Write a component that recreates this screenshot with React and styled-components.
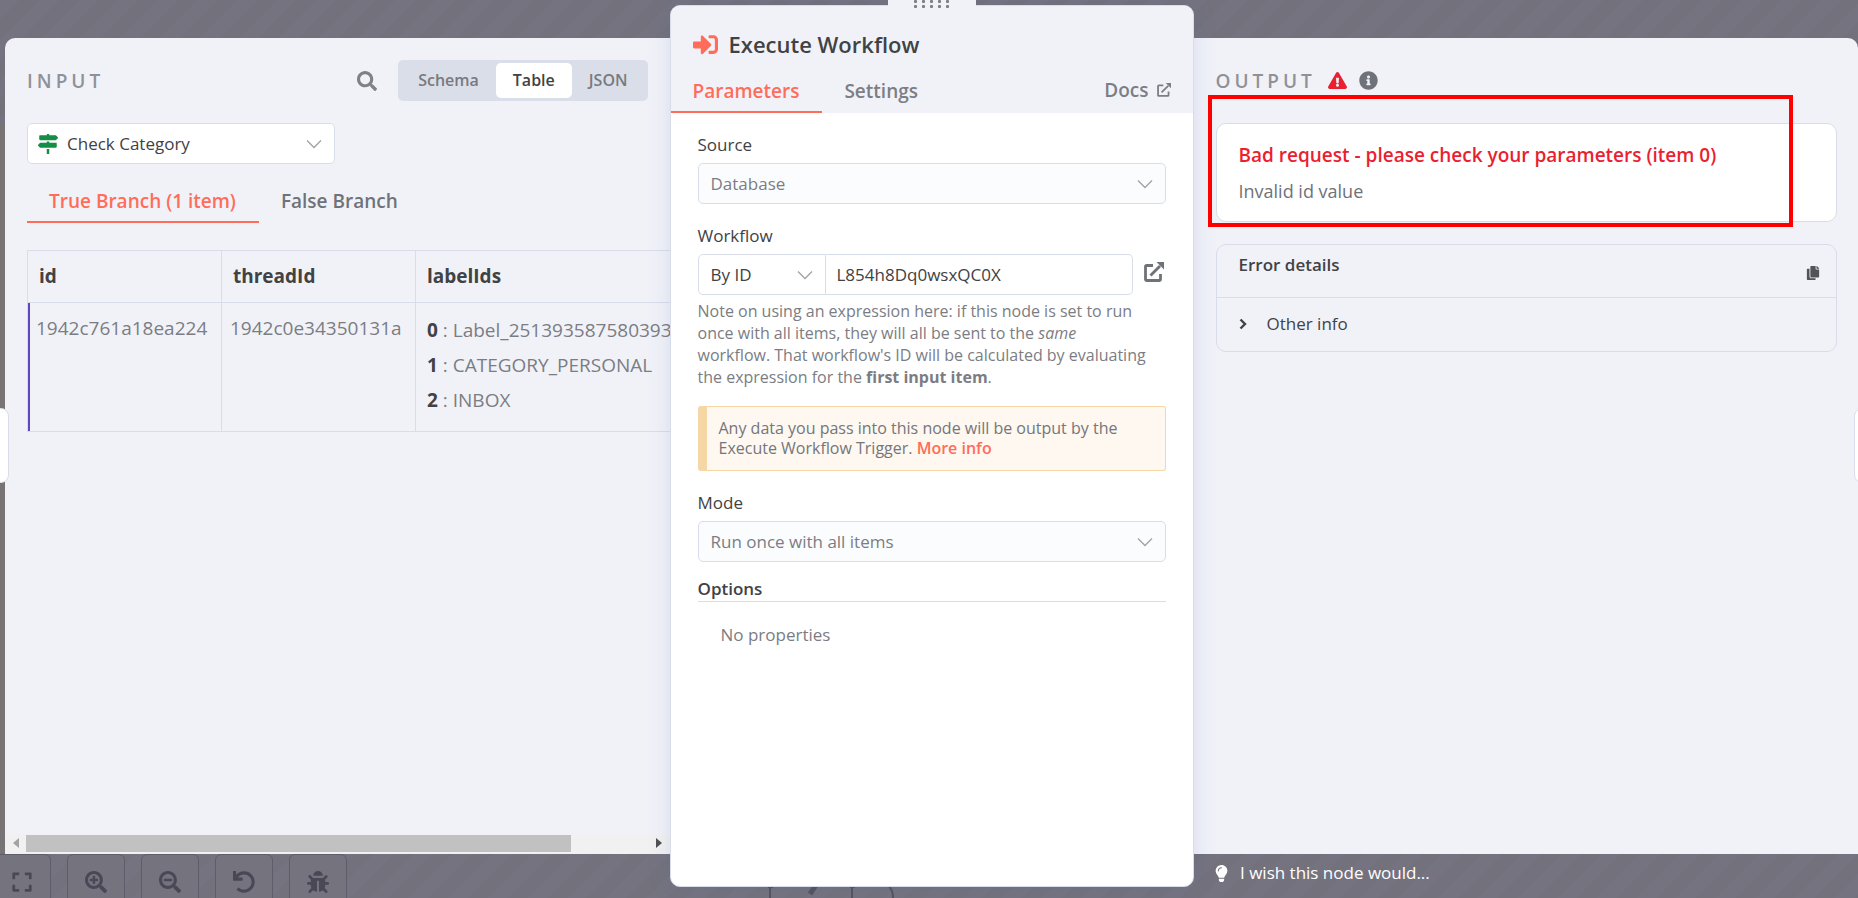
import React from "react";
import styled, { createGlobalStyle, css } from "styled-components";
import {
  FaSearch, FaMapSigns, FaSignInAlt, FaExclamationTriangle, FaInfoCircle, FaCopy,
  FaLightbulb, FaExpand, FaSearchPlus, FaSearchMinus, FaUndo, FaBug,
} from "react-icons/fa";

const c = {
  panel: "#f1f2f8",
  line: "#d9dde9",
  text: "#414244",
  muted: "#7b7d83",
  strong: "#6f7278",
  coral: "#ff6d5a",
  red: "#ea1f30",
};

const Global = createGlobalStyle`
  *, *::before, *::after { box-sizing: border-box; }
  body {
    margin: 0;
    overflow: hidden;
    font-family: "Open Sans", sans-serif;
    font-size: 17px;
    color: ${c.text};
  }
  button, input, select { font: inherit; color: inherit; }
`;

const Page = styled.div`
  position: relative;
  display: flex;
  flex-direction: column;
  height: 100vh;
  overflow: hidden;
  background: repeating-linear-gradient(135deg, #75737f 0 14px, #73717c 14px 28px);
`;

const Columns = styled.main`
  flex: 1;
  min-height: 0;
  display: grid;
  grid-template-columns: minmax(0, 1fr) 524px minmax(0, 1fr);
  padding-left: 5px;
`;

const Side = styled.section`
  display: flex;
  flex-direction: column;
  min-width: 0;
  margin-top: 38px;
  margin-bottom: 44px;
  background: ${c.panel};
  border-radius: ${(p) => (p.$right ? "0 10px 0 0" : "10px 0 0 0")};
  ${(p) => p.$right && css`padding: 0 21px 0 22px;`}
`;

const SideHeader = styled.header`
  display: flex;
  align-items: center;
  gap: 12px;
  height: 41px;
  margin-top: 22px;
  ${(p) => p.$inset && css`padding: 0 22px;`}
`;

const PanelTitle = styled.h2`
  margin: 0;
  font-size: 19px;
  line-height: 26px;
  font-weight: 600;
  letter-spacing: 4px;
  color: #8f9198;
  ${(p) => p.$grow && css`flex: 1;`}
`;

const IconButton = styled.button`
  display: flex;
  align-items: center;
  justify-content: center;
  padding: 0;
  border: 0;
  background: none;
  cursor: pointer;
  color: ${(p) => p.$color || "#7f8187"};
  font-size: ${(p) => p.$size || 20}px;
`;

const Segments = styled.div`
  display: flex;
  margin-left: 9px;
  padding: 3px;
  height: 41px;
  border-radius: 5px;
  background: #dadee8;
`;

const Segment = styled.button`
  border: 0;
  border-radius: 5px;
  padding: 0 17px 2px;
  line-height: 30px;
  font-size: 16px;
  font-weight: 600;
  cursor: pointer;
  background: ${(p) => (p.$active ? "#fff" : "transparent")};
  color: ${(p) => (p.$active ? c.text : "#777a81")};
`;

const SelectShell = styled.div`
  position: relative;
  display: flex;
  align-items: center;
  height: 41px;
  width: ${(p) => p.$width || "100%"};
  border: 1px solid ${c.line};
  border-radius: ${(p) => (p.$joined ? "5px 0 0 5px" : "5px")};
  background: ${(p) => (p.$soft ? "#fbfcfe" : "#fff")};
  color: ${(p) => (p.$soft ? c.muted : c.text)};
  select {
    flex: 1;
    width: 100%;
    height: 100%;
    appearance: none;
    border: 0;
    outline: 0;
    background: none;
    padding: 0 40px 0 12px;
  }
  > svg:last-child {
    position: absolute;
    right: 12px;
    pointer-events: none;
  }
`;

const SourcePicker = styled.div`
  margin: 22px 22px 0;
  svg:first-child { margin-left: 10px; flex: none; }
  select { padding-left: 9px; }
`;

const BranchTabs = styled.nav`
  display: flex;
  margin: 23px 22px 0;
`;

const BranchTab = styled.button`
  height: 36px;
  padding: 0 23px 7px 22px;
  border: 0;
  border-bottom: 2px solid ${(p) => (p.$active ? c.coral : "transparent")};
  background: none;
  font-size: 19px;
  line-height: 24px;
  font-weight: 600;
  cursor: pointer;
  color: ${(p) => (p.$active ? c.coral : c.strong)};
`;

const TableArea = styled.div`
  flex: 1;
  min-height: 0;
  overflow: hidden;
  margin: 27px 0 0 22px;
`;

const DataTable = styled.table`
  width: 860px;
  table-layout: fixed;
  border-collapse: separate;
  border-spacing: 0;
  border-top: 1px solid ${c.line};
  border-left: 1px solid ${c.line};
  font-size: 19px;
  th, td {
    border-right: 1px solid ${c.line};
    border-bottom: 1px solid ${c.line};
    text-align: left;
    vertical-align: top;
  }
  th { height: 52px; padding: 13px 11px; line-height: 25px; font-weight: 700; }
  td { height: 129px; padding: 12px 8px; line-height: 26px; color: ${c.muted}; white-space: nowrap; }
  td:first-child { box-shadow: inset 2px 0 #5f47c4; }
  td:last-child { padding: 10px 11px; }
`;

const LabelList = styled.div`
  display: grid;
  grid-auto-rows: 35px;
  line-height: 35px;
  b { color: ${c.text}; }
`;

const ScrollBar = styled.div`
  display: flex;
  align-items: center;
  justify-content: space-between;
  height: 20px;
  padding: 0 8px 2px;
  background: #f1f1f1;
`;

const ScrollThumb = styled.div`
  flex: 1;
  height: 17px;
  margin: 0 85px 0 7px;
  background: #c1c1c1;
`;

const Center = styled.section`
  position: relative;
  display: flex;
  flex-direction: column;
  margin: 5px 0 11px;
  border: 1px solid ${c.line};
  border-radius: 10px;
  background: #fff;
  box-shadow: 0 0 24px rgba(70, 100, 180, 0.14);
`;

const DragTab = styled.div`
  position: absolute;
  top: -6px;
  left: 50%;
  transform: translateX(-50%);
  display: flex;
  justify-content: center;
  width: 88px;
  height: 10px;
  background: ${c.panel};
`;

const CenterHeader = styled.header`
  height: 107px;
  border-radius: 9px 9px 0 0;
  background: ${c.panel};
`;

const TitleRow = styled.div`
  display: flex;
  align-items: center;
  gap: 11px;
  padding: 23px 22px 0;
  svg { color: ${c.coral}; }
  h1 { margin: 0; font-size: 22px; line-height: 30px; font-weight: 600; }
`;

const NodeTabs = styled.nav`
  display: flex;
  align-items: flex-end;
  margin-top: 13px;
`;

const NodeTab = styled.button`
  height: 41px;
  padding: 0 23px 2px 22px;
  border: 0;
  border-bottom: 2px solid ${(p) => (p.$active ? c.coral : "transparent")};
  background: none;
  font-size: 19px;
  line-height: 24px;
  font-weight: 600;
  cursor: pointer;
  color: ${(p) => (p.$active ? c.coral : "#7c7e84")};
`;

const DocsLink = styled.a`
  display: flex;
  align-items: center;
  gap: 8px;
  height: 41px;
  margin-left: auto;
  padding: 0 22px 5px;
  font-size: 19px;
  font-weight: 600;
  color: #7c7e84;
  text-decoration: none;
`;

const Form = styled.form`
  padding: 20px 27px 0;
`;

const Label = styled.label`
  display: block;
  line-height: 24px;
  margin-bottom: 6px;
`;

const Field = styled.div`
  margin-bottom: ${(p) => (p.$last ? 15 : 20)}px;
`;

const LocatorRow = styled.div`
  display: flex;
  align-items: center;
`;

const IdInput = styled.input`
  flex: 1;
  min-width: 0;
  height: 41px;
  padding: 0 11px;
  border: 1px solid ${c.line};
  border-left: 0;
  border-radius: 0 5px 5px 0;
  outline: 0;
  background: #fff;
`;

const OpenLink = styled.a`
  display: flex;
  padding: 0 2px 6px 11px;
  color: ${c.strong};
`;

const Note = styled.p`
  margin: 5px 0 18px;
  padding-right: 18px;
  font-size: 16px;
  line-height: 22px;
  color: ${c.muted};
`;

const Callout = styled.p`
  margin: 0 0 20px;
  padding: 11px 12px;
  border: 1px solid #f5d6a5;
  border-left-width: 9px;
  border-radius: 3px;
  background: #fef8f0;
  font-size: 16px;
  line-height: 20px;
  min-height: 65px;
  color: #74767c;
  a { color: ${c.coral}; font-weight: 600; text-decoration: none; }
`;

const OptionsTitle = styled.h3`
  margin: 0;
  border-bottom: 1px solid ${c.line};
  font-size: 17px;
  line-height: 24px;
  font-weight: 600;
`;

const NoProps = styled.p`
  margin: 21px 23px;
  line-height: 24px;
  color: ${c.muted};
`;

const ErrorCard = styled.article`
  margin-top: 22px;
  padding: 18px 22px 17px;
  border: 1px solid ${c.line};
  border-radius: 10px;
  background: #fff;
  h3 { margin: 0; font-size: 19px; line-height: 26px; font-weight: 600; color: ${c.red}; }
  p { margin: 10px 0 0; font-size: 18px; line-height: 26px; color: ${c.strong}; }
`;

const Details = styled.article`
  margin-top: 22px;
  border: 1px solid ${c.line};
  border-radius: 10px;
`;

const DetailsHead = styled.header`
  display: flex;
  justify-content: space-between;
  height: 53px;
  padding: 8px 16px 4px 22px;
  border-bottom: 1px solid ${c.line};
  h4 { margin: 0; font-size: 17px; line-height: 24px; font-weight: 600; }
`;

const OtherInfo = styled.button`
  display: flex;
  align-items: center;
  gap: 20px;
  width: 100%;
  height: 53px;
  padding: 0 22px 2px;
  border: 0;
  background: none;
  cursor: pointer;
`;

const Hint = styled.a`
  position: absolute;
  right: 0;
  bottom: 13px;
  width: calc(50% - 284px);
  display: flex;
  align-items: center;
  gap: 10px;
  line-height: 24px;
  font-weight: 500;
  color: #fff;
  text-decoration: none;
`;

const Annotation = styled.div`
  position: absolute;
  top: 95px;
  right: 65px;
  width: 585px;
  height: 132px;
  border: 4px solid #ff0000;
  pointer-events: none;
`;

const CanvasTools = styled.div`
  position: absolute;
  left: -7px;
  bottom: -16px;
  display: flex;
  gap: 16px;
`;

const CanvasButton = styled.button`
  display: flex;
  align-items: center;
  justify-content: center;
  width: 58px;
  height: 60px;
  padding: 0 0 4px;
  border: 1px solid #5f5d6c;
  border-radius: 6px;
  background: #75737d;
  color: #4a4856;
  font-size: 22px;
`;

const CanvasNode = styled.svg`
  position: absolute;
  left: 768px;
  bottom: 0;
`;

const EdgeTab = styled.button`
  position: absolute;
  top: 408px;
  ${(p) => p.$side}: ${(p) => (p.$side === "left" ? -8 : -13)}px;
  width: 17px;
  height: 75px;
  padding: 0;
  border: 1px solid ${c.line};
  border-radius: 8px;
  background: #fff;
`;

const LeftStrip = styled.div`
  position: absolute;
  left: 0;
  top: 123px;
  width: 5px;
  height: 730px;
  background: #787374;
`;

const Chevron = () => (
  <svg width="16" height="10" viewBox="0 0 16 10" fill="none" stroke="#a0a2a8" strokeWidth="1.3">
    <path d="M1 1.5 8 8.5 15 1.5" />
  </svg>
);

const Caret = () => (
  <svg width="8" height="12" viewBox="0 0 8 12" fill="none" stroke="currentColor" strokeWidth="2.4">
    <path d="M1.5 1.5 6 6l-4.5 4.5" />
  </svg>
);

const External = ({ size, heavy }) => (
  <svg width={size} height={size} viewBox="0 0 20 20" fill="none" stroke="currentColor" strokeWidth={heavy ? 2.8 : 2.6}>
    <path d="M9 3.5H2.5a1 1 0 0 0-1 1v13a1 1 0 0 0 1 1h13a1 1 0 0 0 1-1V12" />
    <path d="M6.5 13.5 16 4" />
    <path d="M12.5 0H20v7.5Z" fill="currentColor" stroke="none" />
  </svg>
);

const Arrow = ({ left }) => (
  <svg width="6" height="10" viewBox="0 0 6 10" fill={left ? "#a3a3a3" : "#505050"}>
    <path d={left ? "M6 0v10L0 5Z" : "M0 0v10l6-5Z"} />
  </svg>
);

const Dots = () => (
  <svg width="36" height="8" fill="#7c7e84">
    {[0, 8, 16, 24, 32].map((x) => (
      <React.Fragment key={x}>
        <rect x={x} y="0" width="3" height="3" rx="1" />
        <rect x={x} y="5" width="3" height="3" rx="1" />
      </React.Fragment>
    ))}
  </svg>
);

const labels = ["Label_2513935875803930", "CATEGORY_PERSONAL", "INBOX"];
const tools = [
  ["Fit view", FaExpand],
  ["Zoom in", FaSearchPlus],
  ["Zoom out", FaSearchMinus],
  ["Reset zoom", FaUndo],
  ["Report a bug", FaBug],
];

export default function App() {
  return (
    <>
      <Global />
      <Page>
        <LeftStrip />
        <CanvasTools>
          {tools.map(([name, Icon]) => (
            <CanvasButton key={name} aria-label={name}><Icon /></CanvasButton>
          ))}
        </CanvasTools>
        <CanvasNode width="128" height="12" fill="none" stroke="#55535f" strokeWidth="2">
          <path d="M2 12V2M0 1h5M84 12V2M82 1h5M121 0q4 5 4 12" />
          <path d="m42 8 8-12" strokeWidth="5" />
        </CanvasNode>
        <Columns>
          <Side aria-label="Input">
            <SideHeader $inset>
              <PanelTitle $grow>INPUT</PanelTitle>
              <IconButton aria-label="Search"><FaSearch /></IconButton>
              <Segments>
                <Segment>Schema</Segment>
                <Segment $active>Table</Segment>
                <Segment>JSON</Segment>
              </Segments>
            </SideHeader>
            <SourcePicker>
              <SelectShell $width="308px">
                <FaMapSigns size={20} color="#128e45" />
                <select aria-label="Input node" defaultValue="a"><option value="a">Check Category</option></select>
                <Chevron />
              </SelectShell>
            </SourcePicker>
            <BranchTabs>
              <BranchTab $active>True Branch (1 item)</BranchTab>
              <BranchTab>False Branch</BranchTab>
            </BranchTabs>
            <TableArea>
              <DataTable>
                <colgroup><col width="194" /><col width="194" /><col /></colgroup>
                <thead><tr><th>id</th><th>threadId</th><th>labelIds</th></tr></thead>
                <tbody>
                  <tr>
                    <td>1942c761a18ea224</td>
                    <td>1942c0e34350131a</td>
                    <td>
                      <LabelList>
                        {labels.map((l, i) => <div key={l}><b>{i}</b> : {l}</div>)}
                      </LabelList>
                    </td>
                  </tr>
                </tbody>
              </DataTable>
            </TableArea>
            <ScrollBar><Arrow left /><ScrollThumb /><Arrow /></ScrollBar>
          </Side>

          <Center aria-label="Execute Workflow">
            <DragTab><Dots /></DragTab>
            <CenterHeader>
              <TitleRow><FaSignInAlt size={25} /><h1>Execute Workflow</h1></TitleRow>
              <NodeTabs>
                <NodeTab $active>Parameters</NodeTab>
                <NodeTab>Settings</NodeTab>
                <DocsLink href="#docs">Docs <External size={14} /></DocsLink>
              </NodeTabs>
            </CenterHeader>
            <Form>
              <Field>
                <Label htmlFor="source">Source</Label>
                <SelectShell $soft>
                  <select id="source" defaultValue="a"><option value="a">Database</option></select>
                  <Chevron />
                </SelectShell>
              </Field>
              <Label htmlFor="workflow">Workflow</Label>
              <LocatorRow>
                <SelectShell $width="128px" $joined>
                  <select aria-label="Workflow lookup mode" defaultValue="a"><option value="a">By ID</option></select>
                  <Chevron />
                </SelectShell>
                <IdInput id="workflow" defaultValue="L854h8Dq0wsxQC0X" />
                <OpenLink href="#workflow" aria-label="Open workflow"><External size={20} heavy /></OpenLink>
              </LocatorRow>
              <Note>
                Note on using an expression here: if this node is set to run once with all items, they will
                all be sent to the <em>same</em> workflow. That workflow's ID will be calculated by
                evaluating the expression for the <strong>first input item</strong>.
              </Note>
              <Callout>
                Any data you pass into this node will be output by the Execute Workflow Trigger.{" "}
                <a href="#more">More info</a>
              </Callout>
              <Field $last>
                <Label htmlFor="mode">Mode</Label>
                <SelectShell $soft>
                  <select id="mode" defaultValue="a"><option value="a">Run once with all items</option></select>
                  <Chevron />
                </SelectShell>
              </Field>
              <OptionsTitle>Options</OptionsTitle>
              <NoProps>No properties</NoProps>
            </Form>
          </Center>

          <Side $right aria-label="Output">
            <SideHeader>
              <PanelTitle>OUTPUT</PanelTitle>
              <FaExclamationTriangle size={19} color={c.red} />
              <FaInfoCircle size={19} color={c.strong} />
            </SideHeader>
            <ErrorCard>
              <h3>Bad request - please check your parameters (item 0)</h3>
              <p>Invalid id value</p>
            </ErrorCard>
            <Details>
              <DetailsHead>
                <h4>Error details</h4>
                <IconButton aria-label="Copy error" $size={14} $color="#525356"><FaCopy /></IconButton>
              </DetailsHead>
              <OtherInfo><Caret />Other info</OtherInfo>
            </Details>
          </Side>
        </Columns>
        <Hint href="#feedback"><FaLightbulb size={17} />I wish this node would...</Hint>
        <EdgeTab $side="left" aria-label="Previous node" />
        <EdgeTab $side="right" aria-label="Next node" />
        <Annotation />
      </Page>
    </>
  );
}
